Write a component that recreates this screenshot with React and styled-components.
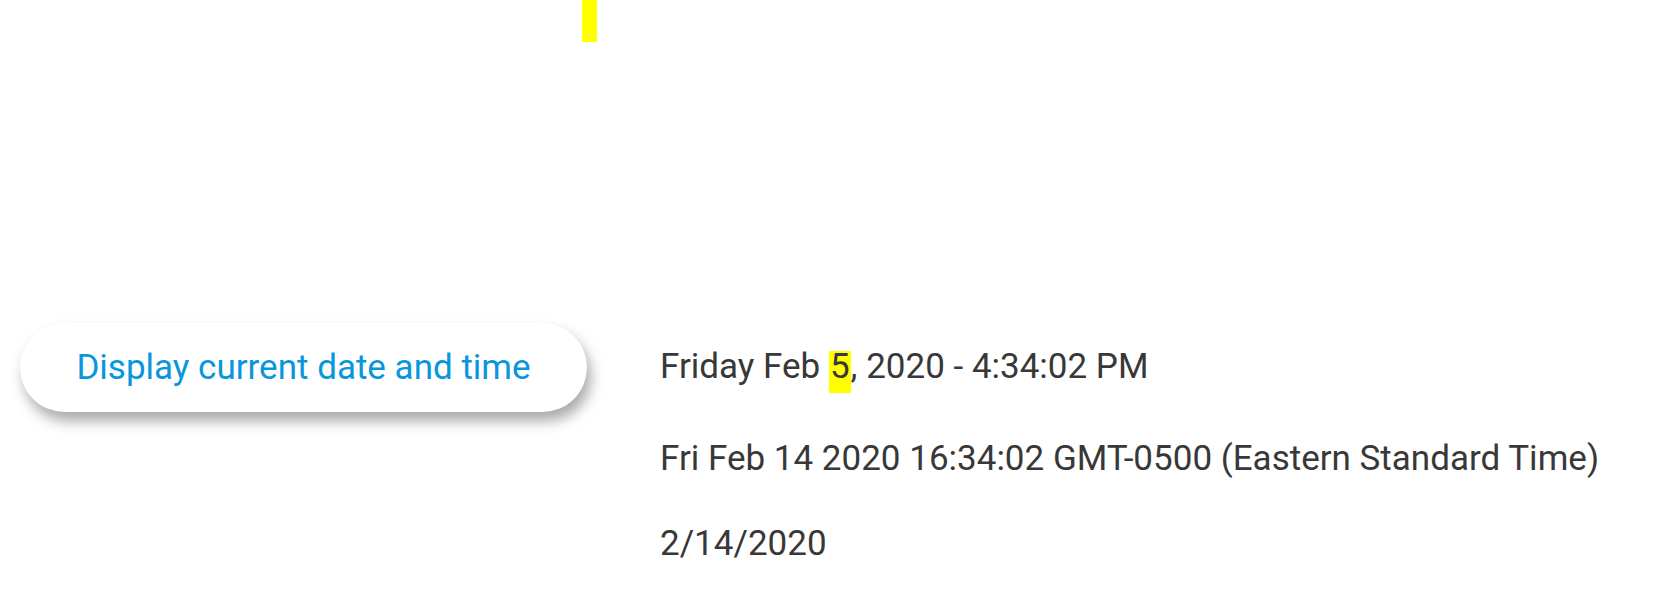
import React from "react";
import styled, { createGlobalStyle } from "styled-components";

const GlobalStyle = createGlobalStyle`
  html, body {
    margin: 0;
    padding: 0;
    background: #ffffff;
  }
  body {
    font-family: Roboto, "Noto Sans", Arial, sans-serif;
  }
`;

const Page = styled.div`
  width: 1666px;
  height: 614px;
  box-sizing: border-box;
  overflow: hidden;
`;

const Marker = styled.span`
  display: block;
  width: 15px;
  height: 42px;
  margin-left: 582px;
  background: #ffff00;
`;

const Row = styled.div`
  display: flex;
  align-items: flex-start;
  margin-top: 281px;
  padding-left: 20px;
  gap: 73px;
`;

const ActionButton = styled.button`
  width: 567px;
  height: 89px;
  flex: none;
  border: none;
  border-radius: 45px;
  background: #ffffff;
  color: #0896dc;
  font-family: Roboto, "Noto Sans", Arial, sans-serif;
  font-size: 35px;
  box-shadow: 4px 9px 14px rgba(0, 0, 0, 0.34);
  cursor: pointer;
  padding: 0;
`;

const Output = styled.div`
  display: flex;
  flex-direction: column;
  padding-top: 24px;
  color: #383838;
  font-size: 35px;
`;

const Line = styled.p`
  margin: ${(p) => p.$gap}px 0 0;
  line-height: 40px;
  white-space: nowrap;
`;

const Highlight = styled.span`
  padding: 0 1px 6px;
  background: linear-gradient(to bottom, transparent 5px, #ffff00 5px);
`;

export default function App() {
  return (
    <Page>
      <GlobalStyle />
      <Marker />
      <Row>
        <ActionButton>Display current date and time</ActionButton>
        <Output>
          <Line $gap={0}>
            Friday Feb <Highlight>5</Highlight>, 2020 - 4:34:02 PM
          </Line>
          <Line $gap={52}>
            Fri Feb 14 2020 16:34:02 GMT-0500 (Eastern Standard Time)
          </Line>
          <Line $gap={45}>2/14/2020</Line>
        </Output>
      </Row>
    </Page>
  );
}
